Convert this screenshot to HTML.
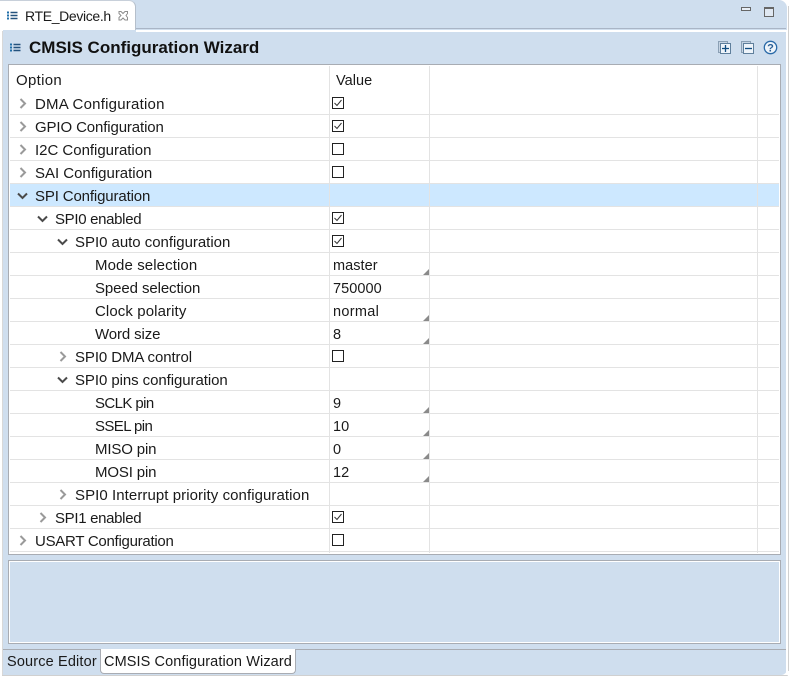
<!DOCTYPE html>
<html><head><meta charset="utf-8">
<style>
html,body{margin:0;padding:0}
body{width:790px;height:677px;overflow:hidden;background:#fff;position:relative;font-family:"Liberation Sans",sans-serif;font-size:15px;letter-spacing:.1px;color:#1a1a1a}
div{position:absolute;box-sizing:border-box}
.t{white-space:nowrap;line-height:20px;height:20px}
.n{font-size:14.5px;letter-spacing:.05px}
.h{left:10px;width:769px;height:1px;background:#e3e3e3}
.v{width:1px;top:66px;height:487px;background:#e3e3e3}
svg{position:absolute;overflow:visible}
</style></head><body>
<div style="left:3px;top:0;width:784px;height:675px;background:#cfdeee;border-radius:0 8px 6px 0"></div>
<div style="left:2px;top:31px;width:1px;height:644px;background:#d8d8d8"></div>
<div style="left:2px;top:675px;width:786px;height:1px;background:#d0d0d0;border-radius:0 0 6px 0"></div>
<div style="left:788px;top:6px;width:1px;height:665px;background:#d0d0d0"></div>
<div style="left:0;top:0;width:136px;height:30px;background:#fff;border-radius:0 7px 0 0;border-right:1px solid #b5bfcb;border-top:1px solid #c8d0da"></div>
<div style="left:136px;top:28px;width:650px;height:1px;background:#a9b5c6"></div>
<div style="left:136px;top:30px;width:651px;height:2px;background:#fff"></div>
<div style="left:786px;top:30px;width:2px;height:645px;background:#fff"></div>
<svg style="left:7px;top:11px" width="12" height="10"><path d="M0 1.500h2M0 4.500h2M0 7.500h2" stroke="#1f6ea8" stroke-width="2"/><path d="M3.500 1.500h7M3.500 4.500h7M3.500 7.500h7" stroke="#24527d" stroke-width="1.500"/></svg>
<div class="t" style="left:25px;top:6px;font-size:14px;letter-spacing:-.35px">RTE_Device.h</div>
<svg style="left:118px;top:10px" width="12" height="11" fill="none" stroke="#8d8d8d"><path d="M1 1.500h2l2 2 2-2h2.500v2L8 5.500 9.500 7.500v2.500H7L5 8 3 10H1V7.500L3 5.500 1 3.500z"/></svg>
<div style="left:741px;top:7px;width:10px;height:4px;border:1px solid #666;background:#e8eef5"></div>
<div style="left:764px;top:7px;width:10px;height:10px;border:1px solid #666;border-top-width:2px;background:#e0e8f2"></div>
<svg style="left:10px;top:43px" width="12" height="10"><path d="M0 1.500h2M0 4.500h2M0 7.500h2" stroke="#1f6ea8" stroke-width="2"/><path d="M3.500 1.500h7M3.500 4.500h7M3.500 7.500h7" stroke="#24527d" stroke-width="1.500"/></svg>
<div class="t" style="left:29px;top:38px;font-size:17px;font-weight:bold;color:#111;letter-spacing:0">CMSIS Configuration Wizard</div>
<svg style="left:718px;top:41px" width="14" height="14" fill="none"><path d="M.5.500h9v2h-7v9h-2z" fill="#c5d3e2" stroke="#8ba0b5"/><rect x="2.500" y="2.500" width="10" height="10" fill="#eef4fa" stroke="#5f7f9c"/><path d="M4 7.500h7M7.500 4v7" stroke="#0f4c81" stroke-width="1.300"/></svg>
<svg style="left:741px;top:41px" width="14" height="14" fill="none"><path d="M.5.500h9v2h-7v9h-2z" fill="#c5d3e2" stroke="#8ba0b5"/><rect x="2.500" y="2.500" width="10" height="10" fill="#eef4fa" stroke="#5f7f9c"/><path d="M4 7.500h7" stroke="#0f4c81" stroke-width="1.300"/></svg>
<svg style="left:763px;top:40px" width="15" height="15"><circle cx="7.500" cy="7.500" r="6.200" fill="#eef4fa" stroke="#2a6aa8" stroke-width="1.300"/><text x="7.500" y="11.500" font-family="Liberation Sans" font-weight="bold" font-size="11" text-anchor="middle" fill="#2a5f95">?</text></svg>
<div style="left:8px;top:64px;width:773px;height:491px;background:#fff;border:1px solid #a8acb3"></div>
<div style="left:10px;top:184px;width:769px;height:22px;background:#cde8ff"></div>
<div class="h" style="top:114px"></div><div class="h" style="top:137px"></div><div class="h" style="top:160px"></div><div class="h" style="top:183px"></div><div class="h" style="top:206px"></div><div class="h" style="top:229px"></div><div class="h" style="top:252px"></div><div class="h" style="top:275px"></div><div class="h" style="top:298px"></div><div class="h" style="top:321px"></div><div class="h" style="top:344px"></div><div class="h" style="top:367px"></div><div class="h" style="top:390px"></div><div class="h" style="top:413px"></div><div class="h" style="top:436px"></div><div class="h" style="top:459px"></div><div class="h" style="top:482px"></div><div class="h" style="top:505px"></div><div class="h" style="top:528px"></div><div class="h" style="top:551px"></div>
<div class="v" style="left:329px"></div><div class="v" style="left:429px"></div><div class="v" style="left:757px"></div>
<div class="t" style="left:16px;top:71px;letter-spacing:.3px">Option</div>
<div class="t n" style="left:336px;top:71px">Value</div>
<div class="t" style="left:35px;top:95px;letter-spacing:.22px">DMA Configuration</div>
<div class="t" style="left:35px;top:118px;letter-spacing:-.12px">GPIO Configuration</div>
<div class="t" style="left:35px;top:141px;letter-spacing:-.02px">I2C Configuration</div>
<div class="t" style="left:35px;top:164px;letter-spacing:-.02px">SAI Configuration</div>
<div class="t" style="left:35px;top:187px;letter-spacing:-.14px">SPI Configuration</div>
<div class="t" style="left:55px;top:210px;letter-spacing:-.32px">SPI0 enabled</div>
<div class="t" style="left:75px;top:233px;letter-spacing:-.03px">SPI0 auto configuration</div>
<div class="t" style="left:95px;top:256px">Mode selection</div>
<div class="t" style="left:95px;top:279px;letter-spacing:-.1px">Speed selection</div>
<div class="t" style="left:95px;top:302px">Clock polarity</div>
<div class="t" style="left:95px;top:325px;letter-spacing:-.12px">Word size</div>
<div class="t" style="left:75px;top:348px;letter-spacing:-.09px">SPI0 DMA control</div>
<div class="t" style="left:75px;top:371px;letter-spacing:-.07px">SPI0 pins configuration</div>
<div class="t" style="left:95px;top:394px;letter-spacing:-.6px">SCLK pin</div>
<div class="t" style="left:95px;top:417px;letter-spacing:-.6px">SSEL pin</div>
<div class="t" style="left:95px;top:440px;letter-spacing:-.15px">MISO pin</div>
<div class="t" style="left:95px;top:463px;letter-spacing:-.15px">MOSI pin</div>
<div class="t" style="left:75px;top:486px;letter-spacing:.07px">SPI0 Interrupt priority configuration</div>
<div class="t" style="left:55px;top:509px;letter-spacing:-.32px">SPI1 enabled</div>
<div class="t" style="left:35px;top:532px;letter-spacing:-.27px">USART Configuration</div>
<div class="t n" style="left:333px;top:256px">master</div>
<div class="t n" style="left:333px;top:279px">750000</div>
<div class="t n" style="left:333px;top:302px;letter-spacing:.3px">normal</div>
<div class="t n" style="left:333px;top:325px">8</div>
<div class="t n" style="left:333px;top:394px">9</div>
<div class="t n" style="left:333px;top:417px">10</div>
<div class="t n" style="left:333px;top:440px">0</div>
<div class="t n" style="left:333px;top:463px">12</div>
<svg style="left:0;top:0;pointer-events:none" width="790" height="677">
<g fill="none" stroke="#9a9a9a" stroke-width="2">
<path d="M20.500 99l4.500 4.500-4.500 4.500M20.500 122l4.500 4.500-4.500 4.500M20.500 145l4.500 4.500-4.500 4.500M20.500 168l4.500 4.500-4.500 4.500M20.500 536l4.500 4.500-4.500 4.500M40.500 513l4.500 4.500-4.500 4.500M60.500 352l4.500 4.500-4.500 4.500M60.500 490l4.500 4.500-4.500 4.500"/>
</g>
<g fill="none" stroke="#4a4a4a" stroke-width="2">
<path d="M18 193.500l4.500 4.500 4.500-4.500M38 216.500l4.500 4.500 4.500-4.500M58 239.500l4.500 4.500 4.500-4.500M58 377.500l4.500 4.500 4.500-4.500"/>
</g>
<g fill="#fff" stroke="#222" stroke-width="1">
<rect x="332.500" y="97.500" width="11" height="11"/><rect x="332.500" y="120.500" width="11" height="11"/><rect x="332.500" y="143.500" width="11" height="11"/><rect x="332.500" y="166.500" width="11" height="11"/><rect x="332.500" y="212.500" width="11" height="11"/><rect x="332.500" y="235.500" width="11" height="11"/><rect x="332.500" y="350.500" width="11" height="11"/><rect x="332.500" y="511.500" width="11" height="11"/><rect x="332.500" y="534.500" width="11" height="11"/>
</g>
<g fill="none" stroke="#333" stroke-width="1">
<path d="M334.500 103l2.500 2.500 4.500-5.500M334.500 126l2.500 2.500 4.500-5.500M334.500 218l2.500 2.500 4.500-5.500M334.500 241l2.500 2.500 4.500-5.500M334.500 517l2.500 2.500 4.500-5.500"/>
</g>
<g fill="#8a8a8a">
<path d="M429 269v6h-6zM429 315v6h-6zM429 338v6h-6zM429 407v6h-6zM429 430v6h-6zM429 453v6h-6zM429 476v6h-6z"/>
</g>
</svg>
<div style="left:8px;top:560px;width:773px;height:84px;background:#cfdeee;border:1px solid #a8acb3;box-shadow:inset 0 0 0 1px #fff"></div>
<div style="left:3px;top:649px;width:783px;height:1px;background:#a8acb3"></div>
<div class="t" style="left:7px;top:652px;letter-spacing:.15px;font-size:14.5px">Source Editor</div>
<div style="left:100px;top:649px;width:196px;height:25px;background:#fff;border:1px solid #a8acb3;border-top:none;border-radius:0 0 4px 4px"></div>
<div class="t" style="left:104px;top:652px;letter-spacing:.1px;font-size:14.5px">CMSIS Configuration Wizard</div>
</body></html>
